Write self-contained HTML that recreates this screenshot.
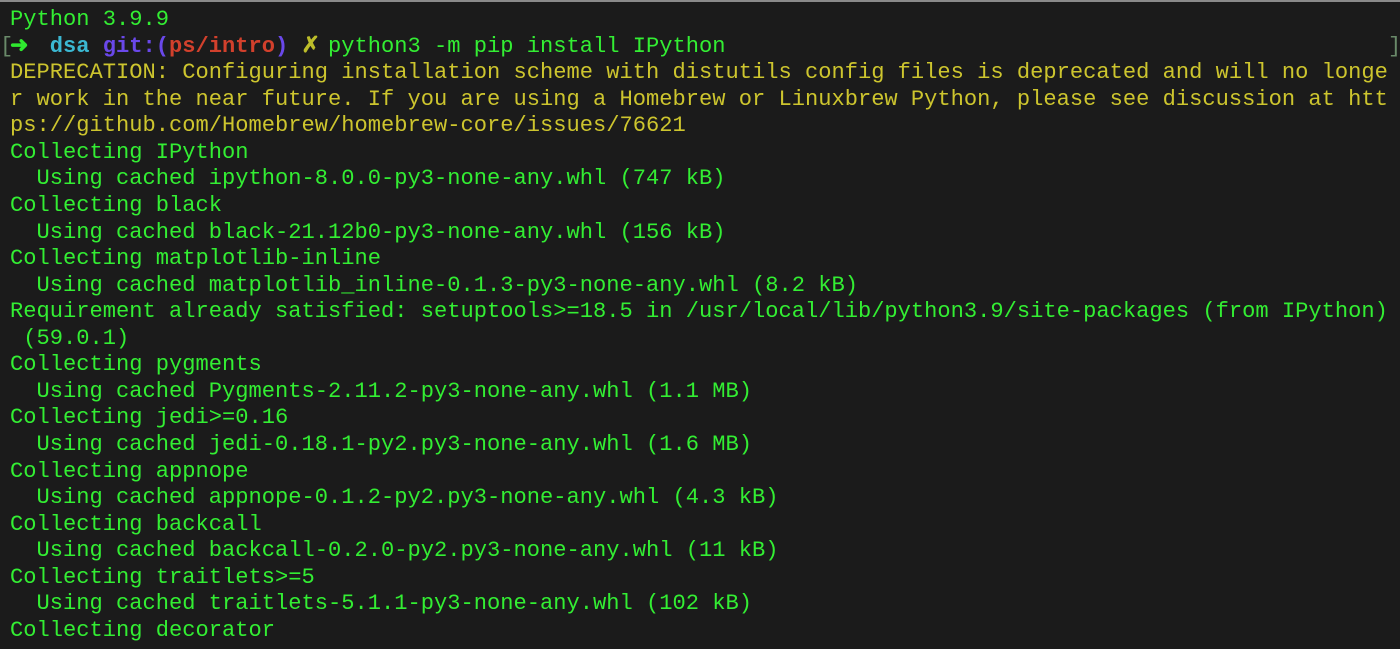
<!DOCTYPE html>
<html><head><meta charset="utf-8"><style>
html,body{margin:0;padding:0;background:#1b1b1b;width:1400px;height:649px;overflow:hidden}
.top{position:absolute;left:0;top:0;width:1400px;height:2px;background:#8a8a8a}
pre{position:absolute;left:10px;top:7px;margin:0;font-family:"Liberation Mono",monospace;font-size:22.08px;line-height:26.56px;color:#33ee33;white-space:pre}
.y{color:#cdc52e}.c{color:#3bb8d2;font-weight:bold}.p{color:#6a48ea;font-weight:bold}.r{color:#d2402c;font-weight:bold}.g{color:#2fe82f;font-weight:bold}.k{color:#bcbd2a;font-weight:bold}
.w{display:inline-block;width:13.25px;overflow:visible}
.br{position:absolute;color:#6a8a6a;font-family:"Liberation Mono",monospace;font-size:22px;line-height:26.56px;top:33.5px}
</style></head><body>
<div class="top"></div>
<div class="br" style="left:0">[</div>
<div class="br" style="left:1388px">]</div>
<pre>Python 3.9.9
<span class="g w">➜</span>  <span class="c">dsa</span> <span class="p">git:(</span><span class="r">ps/intro</span><span class="p">)</span> <span class="k w">✗</span> python3 -m pip install IPython
<span class="y">DEPRECATION: Configuring installation scheme with distutils config files is deprecated and will no longe
r work in the near future. If you are using a Homebrew or Linuxbrew Python, please see discussion at htt
ps://github.com/Homebrew/homebrew-core/issues/76621</span>
Collecting IPython
  Using cached ipython-8.0.0-py3-none-any.whl (747 kB)
Collecting black
  Using cached black-21.12b0-py3-none-any.whl (156 kB)
Collecting matplotlib-inline
  Using cached matplotlib_inline-0.1.3-py3-none-any.whl (8.2 kB)
Requirement already satisfied: setuptools>=18.5 in /usr/local/lib/python3.9/site-packages (from IPython)
 (59.0.1)
Collecting pygments
  Using cached Pygments-2.11.2-py3-none-any.whl (1.1 MB)
Collecting jedi>=0.16
  Using cached jedi-0.18.1-py2.py3-none-any.whl (1.6 MB)
Collecting appnope
  Using cached appnope-0.1.2-py2.py3-none-any.whl (4.3 kB)
Collecting backcall
  Using cached backcall-0.2.0-py2.py3-none-any.whl (11 kB)
Collecting traitlets>=5
  Using cached traitlets-5.1.1-py3-none-any.whl (102 kB)
Collecting decorator</pre>
</body></html>
